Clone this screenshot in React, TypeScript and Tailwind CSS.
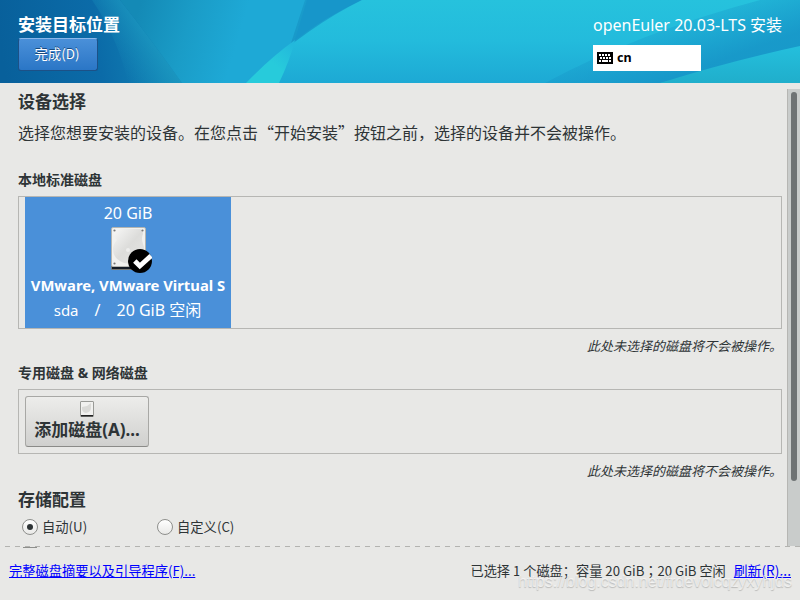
import { useState } from 'react';

type Mode = 'auto' | 'custom';

const NOTE = '此处未选择的磁盘将不会被操作。';

function HeaderBackground() {
  return (
    <svg className="absolute inset-0 h-full w-full" viewBox="0 0 800 83" preserveAspectRatio="none">
      <defs>
        <linearGradient id="base" gradientUnits="userSpaceOnUse" x1="0" y1="40" x2="320" y2="0">
          <stop offset="0" stopColor="#08609b" />
          <stop offset="0.3" stopColor="#0b6ba8" />
          <stop offset="0.5" stopColor="#1283b6" />
          <stop offset="1" stopColor="#1a9fce" />
        </linearGradient>
        <linearGradient id="ray" gradientUnits="userSpaceOnUse" x1="110" y1="55" x2="152" y2="27">
          <stop offset="0" stopColor="#1a96bd" stopOpacity="0" />
          <stop offset="1" stopColor="#1f9fc4" stopOpacity="0.75" />
        </linearGradient>
        <linearGradient id="beam" gradientUnits="userSpaceOnUse" x1="135" y1="20" x2="235" y2="50">
          <stop offset="0" stopColor="#148ab6" />
          <stop offset="0.5" stopColor="#1a9cc7" />
          <stop offset="1" stopColor="#1ea9d6" />
        </linearGradient>
        <linearGradient id="sweep" x1="0" y1="0" x2="0" y2="1">
          <stop offset="0" stopColor="#26c2dd" />
          <stop offset="0.5" stopColor="#23bbdc" />
          <stop offset="1" stopColor="#1da9d4" />
        </linearGradient>
        <linearGradient id="shade" gradientUnits="userSpaceOnUse" x1="640" y1="10" x2="665" y2="80">
          <stop offset="0" stopColor="#189bcb" stopOpacity="0" />
          <stop offset="1" stopColor="#1796c8" stopOpacity="0.9" />
        </linearGradient>
        <linearGradient id="corner" x1="0" y1="0" x2="0" y2="1">
          <stop offset="0" stopColor="#24bfdd" />
          <stop offset="1" stopColor="#20aecb" />
        </linearGradient>
        <linearGradient id="tip" x1="0" y1="1" x2="1" y2="0">
          <stop offset="0" stopColor="#27cbdb" />
          <stop offset="0.5" stopColor="#27cbdb" />
          <stop offset="1" stopColor="#22b5dc" />
        </linearGradient>
      </defs>
      <rect width="800" height="83" fill="url(#base)" />
      <path d="M92 0H120Q150 38 182 83H128Q118 38 92 0Z" fill="url(#ray)" />
      <path d="M120 0H305L278 83H182Q150 38 120 0Z" fill="url(#beam)" />
      <path d="M307 0H362Q325 17 295 40Z" fill="#1796ca" />
      <path d="M362 0Q305 28 246 83H800V0Z" fill="url(#sweep)" />
      <path d="M295 40Q270 58 246 83H279Q290 60 295 40Z" fill="url(#tip)" />
      <path d="M545 83Q640 32 760 0H800V50L660 83Z" fill="url(#shade)" />
      <path d="M660 83Q730 61 800 46V83Z" fill="url(#corner)" />
    </svg>
  );
}

function KeyboardIcon() {
  return (
    <svg className="h-3 w-4" viewBox="0 0 16 12" shapeRendering="crispEdges">
      <rect width="16" height="12" rx="1" fill="#000" />
      <path
        d="M2 2h2v2H2zM5 2h2v2H5zM8 2h2v2H8zM11 2h2v2h-2zM3 5h2v2H3zM6 5h2v2H6zM9 5h2v2H9zM12 5h2v2h-2zM2 8h2v2H2zM5 8h6v2H5zM12 8h2v2h-2z"
        fill="#fff"
      />
    </svg>
  );
}

function DiskIcon() {
  return (
    <svg className="h-12 w-12" viewBox="0 0 48 48">
      <defs>
        <linearGradient id="platter" x1="0" y1="0" x2="1" y2="1">
          <stop offset="0" stopColor="#f8f8f7" />
          <stop offset="0.5" stopColor="#dcdcda" />
          <stop offset="1" stopColor="#e6e6e4" />
        </linearGradient>
      </defs>
      <rect x="7" y="36" width="35" height="9" rx="1.5" fill="#777873" />
      <rect x="8" y="41" width="33" height="3" fill="#141b25" />
      <rect x="7.5" y="2.5" width="34" height="39" rx="1.5" fill="#f1f1ef" stroke="#b4b5b1" />
      <path
        d="M13 4H36Q39 5 39 9Q37 13 39 19Q42 26 37 32Q31 40 20 38Q9 34 9 24Q9 19 13 15Q8 11 10 7Q10 4 13 4Z"
        fill="url(#platter)"
      />
      <circle cx="24" cy="25" r="2" fill="#eeeeec" />
      <circle cx="10.5" cy="5.5" r="1.1" fill="#777" />
      <circle cx="38.5" cy="5.5" r="1.1" fill="#777" />
      <circle cx="10.5" cy="38.5" r="1.1" fill="#777" />
      <circle cx="36" cy="36" r="12" fill="#000" />
      <path d="M30.8 36L35.8 41L47 30.8" fill="none" stroke="#fff" strokeWidth="4.8" />
    </svg>
  );
}

function SmallDiskIcon() {
  return (
    <svg className="h-4 w-4" viewBox="0 0 16 16">
      <rect x="1.5" y="0.5" width="13" height="15" rx="0.5" fill="#f1f1ef" stroke="#999a96" />
      <path d="M3 6L8 5L12 2V7Q12 11 7 12Q3 11 3 8Z" fill="#dadad7" />
      <rect x="2" y="14" width="12" height="1.5" fill="#222" />
    </svg>
  );
}

function Radio({ label, checked, onClick }: { label: string; checked: boolean; onClick: () => void }) {
  return (
    <button type="button" role="radio" aria-checked={checked} onClick={onClick} className="flex h-[22px] w-[135px] items-start gap-1">
      <span className="mt-0.5 flex h-4 w-4 items-center justify-center rounded-full border border-[#8e8f8c] bg-linear-to-b from-white to-[#e9e9e7]">
        {checked && <span className="h-1.5 w-1.5 rounded-full bg-[#2e3436]" />}
      </span>
      <span className="font-['Noto_Sans_CJK_SC',sans-serif] text-[13.3px] leading-5">{label}</span>
    </button>
  );
}

export default function App() {
  const [mode, setMode] = useState<Mode>('auto');

  return (
    <div className="relative flex h-[600px] w-[800px] flex-col overflow-hidden bg-[#e8e8e6] font-['Noto_Sans','Noto_Sans_CJK_SC',sans-serif] text-[#2e3436]">
      <header className="relative h-[83px] shrink-0">
        <HeaderBackground />
        <div className="relative flex justify-between pr-[18px] pl-[18px] text-white">
          <div className="pt-[13px]">
            <h1 className="text-[17px] leading-6 font-bold">安装目标位置</h1>
            <button
              type="button"
              className="mt-px flex h-[33px] w-20 items-center justify-center rounded-[3px] border border-[#1c5187] border-t-[#8bb7ea] bg-linear-to-b from-[#4a90d9] to-[#2a76c6] pr-0.5 pb-0.5 font-['Noto_Sans_CJK_SC',sans-serif] text-[13.4px] [text-shadow:0_-1px_#184a80]"
            >
              完成(D)
            </button>
          </div>
          <div className="w-[189px] pt-[13px]">
            <div className="text-base leading-6 whitespace-nowrap">openEuler 20.03-LTS 安装</div>
            <div className="mt-2 flex h-[26px] w-[108px] items-center gap-1 bg-white pl-1 text-black">
              <KeyboardIcon />
              <span className="text-[12.5px] font-bold">cn</span>
            </div>
          </div>
        </div>
      </header>

      <div className="flex h-[463px] shrink-0">
        <main className="w-[787px] pr-[5px] pl-[18px]">
          <h2 className="mt-[7px] text-[17px] leading-6 font-bold">设备选择</h2>
          <p className="mt-1.5 font-['Noto_Sans_CJK_SC',sans-serif] text-base leading-6">
            选择您想要安装的设备。在您点击“开始安装”按钮之前，选择的设备并不会被操作。
          </p>

          <h3 className="mt-[26px] text-sm leading-5 font-bold">本地标准磁盘</h3>
          <div className="mt-1.5 h-[133px] border border-[#b6b6b3] pl-1.5">
            <div className="flex h-full w-[206px] flex-col items-center bg-[#4a90d9] text-white">
              <span className="mt-1 text-base leading-6">20 GiB</span>
              <DiskIcon />
              <span className="text-[14.8px] leading-6 font-bold whitespace-nowrap">VMware, VMware Virtual S</span>
              <div className="flex gap-4 pt-px pr-px text-base leading-6">
                <span className="text-[15px]">sda</span>
                <span>/</span>
                <span>20 GiB 空闲</span>
              </div>
            </div>
          </div>
          <p className="mt-[7px] text-right text-[13px] leading-5 italic">{NOTE}</p>

          <h3 className="mt-[7px] text-sm leading-5 font-bold">专用磁盘 &amp; 网络磁盘</h3>
          <div className="mt-1.5 h-[65px] border border-[#b6b6b3] pt-1.5 pl-1.5">
            <button
              type="button"
              className="flex h-[51px] w-[124px] flex-col items-center rounded-[3px] border border-[#a8a8a5] border-b-[#8b8b88] bg-linear-to-b from-[#ededeb] to-[#d0d0ce] pt-1"
            >
              <SmallDiskIcon />
              <span className="mt-px text-[17px] leading-6 font-bold whitespace-nowrap">添加磁盘(A)...</span>
            </button>
          </div>
          <p className="mt-[7px] text-right text-[13px] leading-5 italic">{NOTE}</p>

          <h2 className="mt-[7px] text-[17px] leading-6 font-bold">存储配置</h2>
          <div role="radiogroup" className="mt-[5px] flex pl-1">
            <Radio label="自动(U)" checked={mode === 'auto'} onClick={() => setMode('auto')} />
            <Radio label="自定义(C)" checked={mode === 'custom'} onClick={() => setMode('custom')} />
          </div>
          {/* top edge of the option scrolled out of view */}
          <div className="mt-[8px] ml-[5px] h-px w-3.5 bg-[#8e8f8c]" />
        </main>
        <div className="mt-1.5 w-[13px] border-l border-[#b6b6b3] bg-[#c9cccb] pt-[3px] pl-[3px]">
          <div className="h-[389px] w-1.5 rounded-full bg-[#6f7374]" />
        </div>
      </div>

      <div className="h-px shrink-0 bg-[repeating-linear-gradient(90deg,transparent_0_5px,#b3b3b0_5px_10px)]" />
      <footer className="flex items-center justify-between px-[9px] pt-[14px] font-['Noto_Sans_CJK_SC',sans-serif] text-[13.2px] leading-5">
        <a href="#" className="text-[13.25px] text-[#0000ff] underline">完整磁盘摘要以及引导程序(F)...</a>
        <div className="flex gap-2 whitespace-nowrap">
          <span>
            已选择 1 个磁盘；容量 20 GiB<span className="font-['Noto_Sans_CJK_TC',sans-serif]" lang="zh-TW">；</span>20 GiB 空闲
          </span>
          <a href="#" className="text-[13.8px] leading-[19px] text-[#0000ff] underline">刷新(R)...</a>
        </div>
      </footer>
      <div className="pointer-events-none absolute top-[572px] left-[518px] font-['Liberation_Sans',sans-serif] text-base leading-5 whitespace-nowrap text-white/60 [text-shadow:0_1px_1px_#0003]">
        https://blog.csdn.net/frdevolcqzyxyhjds
      </div>
    </div>
  );
}
